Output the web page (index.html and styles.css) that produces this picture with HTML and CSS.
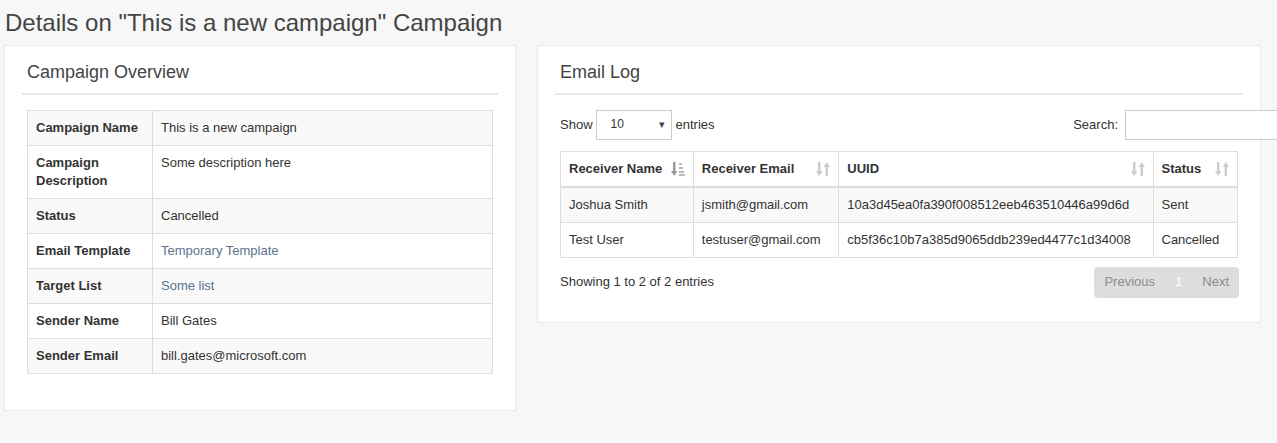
FILE: index.html
```html
<!DOCTYPE html>
<html>
<head>
<meta charset="utf-8">
<link rel="stylesheet" href="styles.css">
</head>
<body>
<h1 class="page-title">Details on "This is a new campaign" Campaign</h1>
<div class="row">
  <div class="panel panel-left">
    <div class="panel-title"><h2>Campaign Overview</h2></div>
    <div class="panel-content">
      <table class="detail-table">
        <tbody>
          <tr class="odd"><th>Campaign Name</th><td>This is a new campaign</td></tr>
          <tr><th>Campaign Description</th><td>Some description here</td></tr>
          <tr class="odd"><th>Status</th><td>Cancelled</td></tr>
          <tr><th>Email Template</th><td><a class="link" href="#">Temporary Template</a></td></tr>
          <tr class="odd"><th>Target List</th><td><a class="link" href="#">Some list</a></td></tr>
          <tr><th>Sender Name</th><td>Bill Gates</td></tr>
          <tr class="odd"><th>Sender Email</th><td>bill.gates@microsoft.com</td></tr>
        </tbody>
      </table>
    </div>
  </div>
  <div class="panel panel-right">
    <div class="panel-title"><h2>Email Log</h2></div>
    <div class="panel-content">
      <div class="dt-top">
        <div class="dt-length">
          <span>Show</span>
          <div class="select"><span>10</span><span class="caret">&#9662;</span></div>
          <span>entries</span>
        </div>
        <div class="dt-filter">
          <span>Search:</span>
          <div class="search-input"></div>
        </div>
      </div>
      <table class="log-table">
        <thead>
          <tr>
            <th class="c1"><span>Receiver Name</span>
              <svg class="sort" width="14" height="16" viewBox="0 0 14 16"><rect x="2" y="1" width="2.4" height="10" fill="#999"/><polygon points="0,10 6.4,10 3.2,15" fill="#999"/><rect x="8" y="2" width="3" height="2" fill="#bbb"/><rect x="8" y="6" width="4" height="2" fill="#bbb"/><rect x="8" y="10" width="5" height="2" fill="#bbb"/><rect x="8" y="13" width="6" height="2" fill="#bbb"/></svg>
            </th>
            <th class="c2"><span>Receiver Email</span>
              <svg class="sort" width="14" height="16" viewBox="0 0 14 16"><rect x="2" y="1" width="2.4" height="10" fill="#ccc"/><polygon points="0,10 6.4,10 3.2,15" fill="#ccc"/><rect x="9.6" y="5" width="2.4" height="10" fill="#ccc"/><polygon points="7.6,6 14,6 10.8,1" fill="#ccc"/></svg>
            </th>
            <th class="c3"><span>UUID</span>
              <svg class="sort" width="14" height="16" viewBox="0 0 14 16"><rect x="2" y="1" width="2.4" height="10" fill="#ccc"/><polygon points="0,10 6.4,10 3.2,15" fill="#ccc"/><rect x="9.6" y="5" width="2.4" height="10" fill="#ccc"/><polygon points="7.6,6 14,6 10.8,1" fill="#ccc"/></svg>
            </th>
            <th class="c4"><span>Status</span>
              <svg class="sort" width="14" height="16" viewBox="0 0 14 16"><rect x="2" y="1" width="2.4" height="10" fill="#ccc"/><polygon points="0,10 6.4,10 3.2,15" fill="#ccc"/><rect x="9.6" y="5" width="2.4" height="10" fill="#ccc"/><polygon points="7.6,6 14,6 10.8,1" fill="#ccc"/></svg>
            </th>
          </tr>
        </thead>
        <tbody>
          <tr class="odd"><td>Joshua Smith</td><td>jsmith@gmail.com</td><td>10a3d45ea0fa390f008512eeb463510446a99d6d</td><td>Sent</td></tr>
          <tr><td>Test User</td><td>testuser@gmail.com</td><td>cb5f36c10b7a385d9065ddb239ed4477c1d34008</td><td>Cancelled</td></tr>
        </tbody>
      </table>
      <div class="dt-bottom">
        <div class="dt-info">Showing 1 to 2 of 2 entries</div>
        <div class="pagination">
          <span class="pg">Previous</span>
          <span class="pg current">1</span>
          <span class="pg">Next</span>
        </div>
      </div>
    </div>
  </div>
</div>
</body>
</html>
```
FILE: styles.css
```css
html, body {
  margin: 0;
  padding: 0;
}
body {
  background: #f7f7f7;
  font-family: "Liberation Sans", Arial, sans-serif;
  font-size: 13px;
  line-height: 1.42857;
  color: #333;
  overflow: hidden;
}
.page-title {
  margin: 0;
  padding: 9px 0 0 5px;
  height: 36px;
  box-sizing: border-box;
  font-size: 24px;
  font-weight: normal;
  line-height: 28px;
  color: #444;
}
.row {
  display: flex;
  align-items: flex-start;
  gap: 21px;
  padding-left: 4px;
  margin-top: 9px;
}
.panel {
  background: #fff;
  border: 1px solid #e6e9ed;
  padding: 10px 17px;
  box-sizing: border-box;
}
.panel-left { width: 512px; }
.panel-right { width: 724px; }
.panel-title {
  padding: 0 5px;
  border-bottom: 2px solid #e6e9ed;
}
.panel-title h2 {
  margin: 0;
  padding: 6px 0 11px;
  font-size: 18px;
  font-weight: normal;
  line-height: 20px;
  color: #444;
}
.panel-content {
  padding: 15px 5px 6px;
}
.panel-left .panel-content { padding-bottom: 26px; }
table {
  border-collapse: collapse;
  border-spacing: 0;
  width: 100%;
}
.detail-table th, .detail-table td,
.log-table th, .log-table td {
  border: 1px solid #ddd;
  padding: 8px;
  text-align: left;
  vertical-align: top;
  line-height: 18px;
}
.detail-table th {
  width: 108px;
  font-weight: bold;
}
tr.odd th, tr.odd td {
  background: #f9f9f9;
}
.link {
  color: #5a738e;
  text-decoration: none;
}
.dt-top {
  display: flex;
  justify-content: space-between;
  align-items: center;
  height: 30px;
}
.dt-length {
  display: flex;
  align-items: center;
}
.select {
  margin: 0 4px 0 3px;
  width: 76px;
  height: 30px;
  box-sizing: border-box;
  border: 1px solid #ccc;
  display: flex;
  align-items: center;
  justify-content: space-between;
  padding: 0 6px 0 14px;
  font-size: 12px;
}
.caret {
  font-size: 11px;
  color: #444;
}
.dt-filter {
  display: flex;
  align-items: center;
  margin-right: -47px;
}
.search-input {
  margin-left: 7px;
  width: 160px;
  height: 30px;
  box-sizing: border-box;
  border: 1px solid #ccc;
  background: #fff;
}
.log-table {
  margin-top: 11px;
}
.log-table thead th {
  border-bottom: 2px solid #ddd;
  font-weight: bold;
  padding-right: 8px;
  vertical-align: middle;
}
.log-table thead th span {
  display: inline-block;
}
.log-table th {
  white-space: nowrap;
}
.log-table thead th .sort {
  float: right;
  margin-top: 1px;
}
.c1 { width: 117px; }
.c2 { width: 129px; }
.c3 { width: 298px; }
.c4 { width: 68px; }
.dt-bottom {
  display: flex;
  justify-content: space-between;
  align-items: center;
  margin-top: 9px;
  margin-bottom: 8px;
}
.pagination {
  display: flex;
  background: #ddd;
  border-radius: 4px;
  height: 31px;
  align-items: center;
  margin-right: -1px;
}
.pg {
  padding: 0 10px;
  color: #8c8c8c;
}
.pg.current {
  color: #fff;
}
```
